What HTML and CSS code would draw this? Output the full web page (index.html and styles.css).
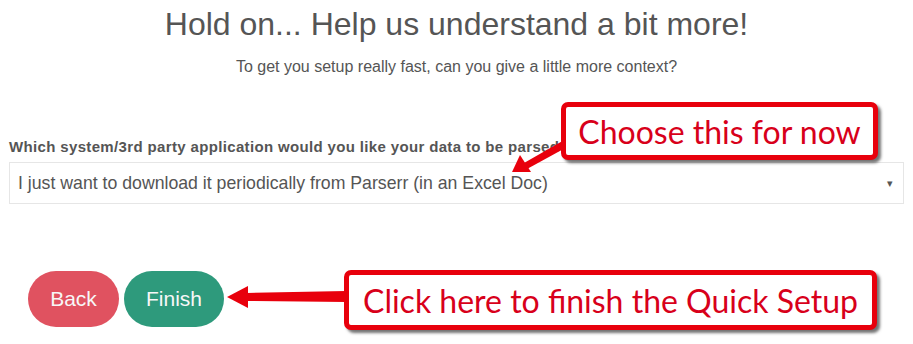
FILE: index.html
```html
<!DOCTYPE html>
<html>
<head>
<meta charset="utf-8">
<link rel="stylesheet" href="styles.css">
</head>
<body>
<div class="page">
  <header class="intro">
    <h1 class="title">Hold on... Help us understand a bit more!</h1>
    <p class="subtitle">To get you setup really fast, can you give a little more context?</p>
  </header>
  <div class="field">
    <label class="label">Which system/3rd party application would you like your data to be parsed to?</label>
    <div class="select">
      <span class="select-text">I just want to download it periodically from Parserr (in an Excel Doc)</span>
      <span class="caret">&#9662;</span>
    </div>
  </div>
  <div class="actions">
    <button class="btn btn-back">Back</button>
    <button class="btn btn-finish">Finish</button>
  </div>

  <svg class="arrows" width="913" height="344" viewBox="0 0 913 344">
    <g fill="#e8000c" stroke="none">
      <polygon points="566,139 569,146 527,169 524,163"/>
      <polygon points="512,172 520,155 531,172"/>
      <polygon points="247,293 346,291 346,302 247,301"/>
      <polygon points="227,297 248,286 248,308"/>
    </g>
  </svg>
  <div class="callout callout-choose">Choose this for now</div>
  <div class="callout callout-finish">Click here to finish the Quick Setup</div>
</div>
</body>
</html>
```
FILE: styles.css
```css
html, body {
  margin: 0;
  padding: 0;
  background: #ffffff;
}
.page {
  position: relative;
  width: 913px;
  height: 344px;
  overflow: hidden;
  font-family: "Liberation Sans", Arial, sans-serif;
  color: #555555;
}
.intro {
  text-align: center;
  padding-top: 2px;
}
.title {
  margin: 0;
  font-size: 32px;
  font-weight: normal;
  line-height: 44px;
  color: #555555;
}
.subtitle {
  margin: 11px 0 0 0;
  font-size: 16px;
  line-height: 20px;
  color: #555555;
}
.field {
  padding: 61px 9px 0 9px;
}
.label {
  display: block;
  font-size: 15px;
  font-weight: bold;
  letter-spacing: 0.35px;
  line-height: 18px;
  color: #555555;
  white-space: nowrap;
}
.select {
  margin-top: 6px;
  height: 40px;
  border: 1px solid #e6e6e6;
  display: flex;
  align-items: center;
  justify-content: space-between;
  padding: 0 10px 0 8px;
}
.select-text {
  font-size: 17.7px;
  color: #555555;
}
.caret {
  font-size: 11px;
  color: #555555;
}
.actions {
  display: flex;
  gap: 5px;
  padding: 67px 0 0 28px;
}
.btn {
  border: none;
  border-radius: 28px;
  height: 56px;
  padding: 0;
  font-family: "Liberation Sans", Arial, sans-serif;
  font-size: 21px;
  color: #f7f7f7;
}
.btn-back {
  background: #e05260;
  width: 91px;
}
.btn-finish {
  background: #2e9a7c;
  width: 100px;
}
.arrows {
  position: absolute;
  left: 0;
  top: 0;
  pointer-events: none;
}
.callout {
  position: absolute;
  box-sizing: border-box;
  background: #ffffff;
  border: 5px solid #e8000c;
  border-radius: 7px;
  box-shadow: 3px 3px 3px rgba(0, 0, 0, 0.55);
  color: #d8001a;
  font-family: Lato, "Noto Sans", sans-serif;
  font-size: 32px;
  display: flex;
  align-items: center;
  justify-content: center;
  white-space: nowrap;
}
.callout-choose {
  left: 561px;
  top: 102px;
  width: 317px;
  height: 58px;
}
.callout-finish {
  left: 344px;
  top: 270px;
  width: 533px;
  height: 60px;
}
```
